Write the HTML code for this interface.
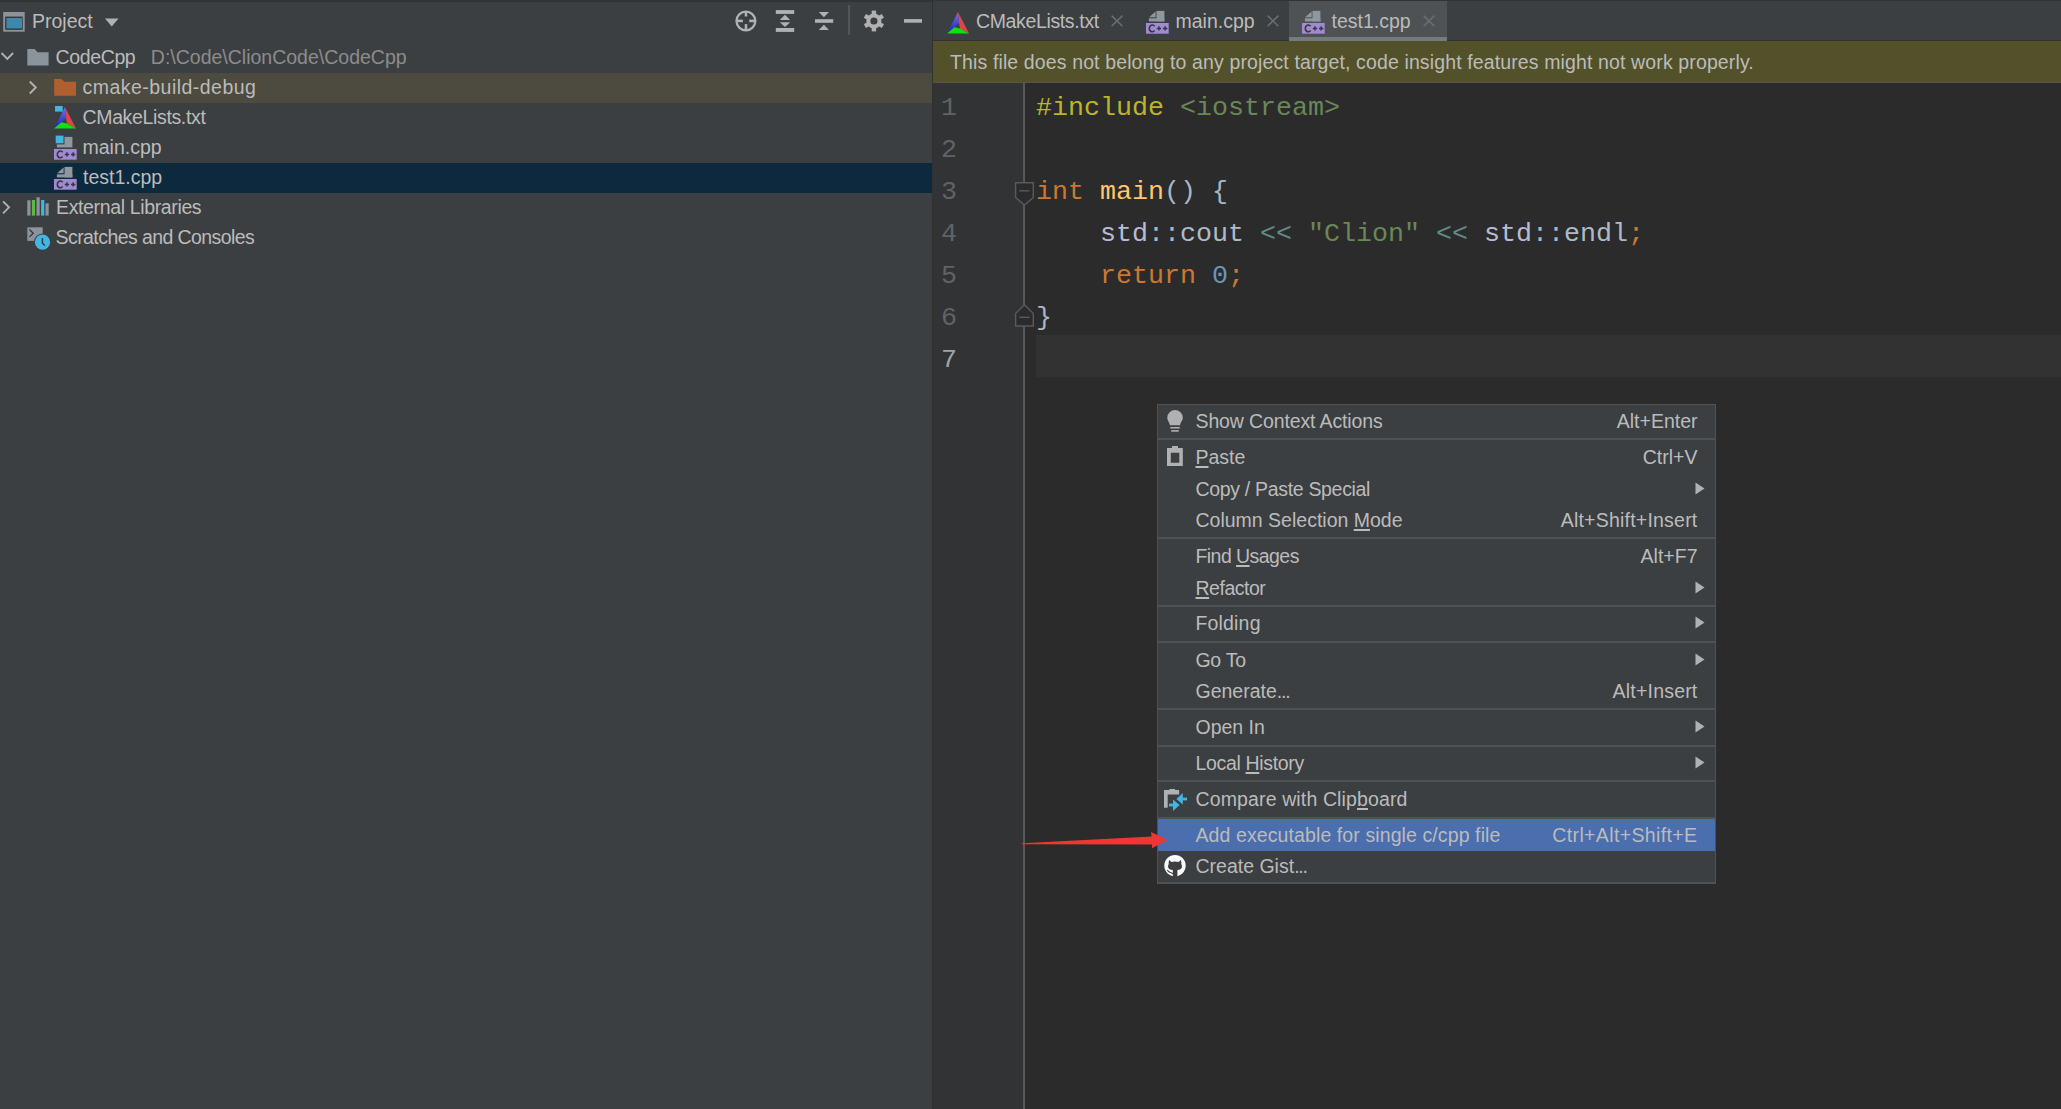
<!DOCTYPE html>
<html><head><meta charset="utf-8"><style>
html,body{margin:0;padding:0;width:2061px;height:1109px;overflow:hidden;background:#3C3F41}
.r,.t{position:absolute}
.t{white-space:pre}
u{text-decoration:underline;text-underline-offset:1.5px;text-decoration-thickness:1.6px}
</style></head><body>
<div class="r" style="left:0px;top:0px;width:2061px;height:1109px;background:#3C3F41;"></div>
<div class="r" style="left:0px;top:0px;width:932px;height:2px;background:#313335;"></div>
<div class="r" style="left:932px;top:0px;width:1129px;height:1px;background:#313335;"></div>
<div class="r" style="left:932px;top:0px;width:1px;height:1109px;background:#2F3133;"></div>
<div class="r" style="left:0px;top:73px;width:932px;height:30px;background:#4D4A3F;"></div>
<div class="r" style="left:0px;top:163px;width:932px;height:30px;background:#0D293E;"></div>
<div class="r" style="left:933px;top:41px;width:1128px;height:1068px;background:#2B2B2B;"></div>
<div class="r" style="left:933px;top:83px;width:90px;height:1026px;background:#313335;"></div>
<div class="r" style="left:1023px;top:83px;width:2px;height:1026px;background:#585858;"></div>
<div class="r" style="left:1036px;top:335px;width:1025px;height:42px;background:#323232;"></div>
<div class="r" style="left:933px;top:40px;width:1128px;height:1px;background:#323232;"></div>
<div class="r" style="left:933px;top:41px;width:1128px;height:41px;background:#52512A;"></div>
<div class="r" style="left:933px;top:82px;width:1128px;height:1px;background:#555553;"></div>
<div class="r" style="left:1289px;top:1px;width:158px;height:36px;background:#4E5254;"></div>
<div class="r" style="left:1289px;top:37px;width:158px;height:4px;background:#747A80;"></div>
<div class="r" style="left:1157px;top:404px;width:559px;height:480px;background:#515151;"></div>
<div class="r" style="left:1158px;top:405px;width:557px;height:477px;background:#3C3F41;"></div>
<div class="r" style="left:1158px;top:438px;width:557px;height:2px;background:#515151;"></div>
<div class="r" style="left:1158px;top:537px;width:557px;height:2px;background:#515151;"></div>
<div class="r" style="left:1158px;top:605px;width:557px;height:2px;background:#515151;"></div>
<div class="r" style="left:1158px;top:641px;width:557px;height:2px;background:#515151;"></div>
<div class="r" style="left:1158px;top:708px;width:557px;height:2px;background:#515151;"></div>
<div class="r" style="left:1158px;top:744.5px;width:557px;height:2px;background:#515151;"></div>
<div class="r" style="left:1158px;top:780px;width:557px;height:2px;background:#515151;"></div>
<div class="r" style="left:1158px;top:816.5px;width:557px;height:2px;background:#515151;"></div>
<div class="r" style="left:1158px;top:818.5px;width:557px;height:32.2px;background:#4B6EAF;"></div>

<svg class="r" style="left:0px;top:8px;overflow:visible" width="30" height="28" viewBox="0 8 30 28"><rect x="3.2" y="12" width="21.5" height="19.7" fill="#8A949A"/><rect x="5.2" y="16.6" width="17.5" height="13.2" fill="#2E3133"/><rect x="6.4" y="17.9" width="15.6" height="10.6" fill="#3D88AC"/></svg>
<svg class="r" style="left:100px;top:14px;overflow:visible" width="24" height="16" viewBox="100 14 24 16"><polygon points="105,18.4 118.5,18.4 111.75,26.4" fill="#AFB1B3"/></svg>
<svg class="r" style="left:728px;top:4px;overflow:visible" width="112" height="34" viewBox="728 4 112 34"><circle cx="745.9" cy="21" r="9.4" fill="none" stroke="#AFB1B3" stroke-width="2.3"/><rect x="744.7" y="11" width="2.5" height="5.5" fill="#AFB1B3"/><rect x="744.7" y="24.1" width="2.5" height="6" fill="#AFB1B3"/><rect x="736" y="19.6" width="6.9" height="2.6" fill="#AFB1B3"/><rect x="749.2" y="19.6" width="6.9" height="2.6" fill="#AFB1B3"/><rect x="775.8" y="10.1" width="18.4" height="3.8" fill="#AFB1B3"/><rect x="775.8" y="28" width="18.4" height="3.9" fill="#AFB1B3"/><polygon points="785,14.8 790.2,20 779.8,20" fill="#AFB1B3"/><polygon points="779.8,22.2 790.2,22.2 785,27" fill="#AFB1B3"/><polygon points="818.8,11.9 829,11.9 823.9,17.2" fill="#AFB1B3"/><rect x="815" y="19.2" width="18.2" height="3.6" fill="#AFB1B3"/><polygon points="823.9,24.8 829,30.1 818.8,30.1" fill="#AFB1B3"/></svg>
<svg class="r" style="left:846px;top:4px;overflow:visible" width="6" height="34" viewBox="846 4 6 34"><rect x="848.1" y="5" width="2" height="30" fill="#555758"/></svg>
<svg class="r" style="left:860px;top:6px;overflow:visible" width="28" height="30" viewBox="860 6 28 30"><rect x="871.7" y="10.6" width="4.4" height="5" fill="#AFB1B3" transform="rotate(0 873.9 21)"/><rect x="871.7" y="10.6" width="4.4" height="5" fill="#AFB1B3" transform="rotate(60 873.9 21)"/><rect x="871.7" y="10.6" width="4.4" height="5" fill="#AFB1B3" transform="rotate(120 873.9 21)"/><rect x="871.7" y="10.6" width="4.4" height="5" fill="#AFB1B3" transform="rotate(180 873.9 21)"/><rect x="871.7" y="10.6" width="4.4" height="5" fill="#AFB1B3" transform="rotate(240 873.9 21)"/><rect x="871.7" y="10.6" width="4.4" height="5" fill="#AFB1B3" transform="rotate(300 873.9 21)"/><circle cx="873.9" cy="21" r="5.6" fill="none" stroke="#AFB1B3" stroke-width="4"/></svg>
<svg class="r" style="left:900px;top:15px;overflow:visible" width="26" height="12" viewBox="900 15 26 12"><rect x="904" y="19.1" width="18" height="3.6" fill="#AFB1B3"/></svg>
<svg class="r" style="left:0px;top:48px;overflow:visible" width="16" height="16" viewBox="0 48 16 16"><polyline points="1.5,53 7.3,58.8 13.1,53" fill="none" stroke="#AFB1B3" stroke-width="1.9"/></svg>
<svg class="r" style="left:26px;top:78px;overflow:visible" width="14" height="20" viewBox="26 78 14 20"><polyline points="29.8,81.5 35.8,87.5 29.8,93.5" fill="none" stroke="#AFB1B3" stroke-width="1.9"/></svg>
<svg class="r" style="left:0px;top:198px;overflow:visible" width="14" height="20" viewBox="0 198 14 20"><polyline points="3,201.3 9,207.3 3,213.3" fill="none" stroke="#AFB1B3" stroke-width="1.9"/></svg>
<svg class="r" style="left:25px;top:46px;overflow:visible" width="26" height="22" viewBox="25 46 26 22"><path d="M27.3 49.1 H34.6 L37.6 52.2 H48.6 V65.6 H27.3 Z" fill="#8A949A"/></svg>
<svg class="r" style="left:52px;top:76px;overflow:visible" width="26" height="22" viewBox="52 76 26 22"><path d="M54.2 79 H61.5 L64.5 81.8 H76 V95.8 H54.2 Z" fill="#B15F30"/></svg>
<svg class="r" style="left:52.2px;top:104px;overflow:visible" width="26" height="27" viewBox="52.2 104 26 27"><defs><linearGradient id="gb65.2" x1="0" y1="0" x2="0" y2="1"><stop offset="0" stop-color="#6E78F0"/><stop offset="1" stop-color="#1A1AC0"/></linearGradient></defs><polygon points="65.2,107 66.2,118 61.6,122.2 54.2,128.5" fill="url(#gb65.2)"/><polygon points="65.2,107 76.2,128.5 67.2,123.5 66.2,118" fill="#D84848"/><polygon points="54.2,128.5 61.6,122.2 67.2,123.5 76.2,128.5" fill="#10E010"/><rect x="55.2" y="106" width="7.7" height="5.6" fill="#40B6E0"/></svg>
<svg class="r" style="left:944.8px;top:8.6px;overflow:visible" width="26" height="27" viewBox="944.8 8.6 26 27"><defs><linearGradient id="gb957.8" x1="0" y1="0" x2="0" y2="1"><stop offset="0" stop-color="#6E78F0"/><stop offset="1" stop-color="#1A1AC0"/></linearGradient></defs><polygon points="957.8,11.6 958.8,22.6 954.1999999999999,26.799999999999997 946.8,33.1" fill="url(#gb957.8)"/><polygon points="957.8,11.6 968.8,33.1 959.8,28.1 958.8,22.6" fill="#D84848"/><polygon points="946.8,33.1 954.1999999999999,26.799999999999997 959.8,28.1 968.8,33.1" fill="#10E010"/></svg>
<svg class="r" style="left:52.3px;top:133.4px;overflow:visible" width="28" height="30" viewBox="52.3 133.4 28 30"><rect x="57.199999999999996" y="137.3" width="15.5" height="10.5" fill="#8E989E"/><rect x="55.0" y="135.0" width="9.8" height="9.8" fill="#3C3F41"/><rect x="56.0" y="136.0" width="7.8" height="7.7" fill="#40B6E0"/><rect x="54.3" y="149.4" width="22.7" height="10.7" fill="#A08BD0"/><path d="M62.9 152.6 A3 3.4 0 1 0 62.9 157.0" fill="none" stroke="#3B3346" stroke-width="1.6"/><path d="M65.1 154.8 h4.3 M67.25 152.70000000000002 v4.3 M71.3 154.8 h4.3 M73.44999999999999 152.70000000000002 v4.3" stroke="#3B3346" stroke-width="1.5"/></svg>
<svg class="r" style="left:52.3px;top:163.0px;overflow:visible" width="28" height="30" viewBox="52.3 163.0 28 30"><rect x="64.8" y="166.9" width="7.9" height="10.5" fill="#8E989E"/><rect x="57.199999999999996" y="174.3" width="15.5" height="3.1" fill="#8E989E"/><polygon points="57.4,173.3 63.9,167.4 63.9,173.3" fill="#8E989E"/><rect x="54.3" y="179.0" width="22.7" height="10.7" fill="#A08BD0"/><path d="M62.9 182.2 A3 3.4 0 1 0 62.9 186.6" fill="none" stroke="#3B3346" stroke-width="1.6"/><path d="M65.1 184.4 h4.3 M67.25 182.3 v4.3 M71.3 184.4 h4.3 M73.44999999999999 182.3 v4.3" stroke="#3B3346" stroke-width="1.5"/></svg>
<svg class="r" style="left:1144.2px;top:7.199999999999999px;overflow:visible" width="28" height="30" viewBox="1144.2 7.199999999999999 28 30"><rect x="1156.7" y="11.1" width="7.9" height="10.5" fill="#8E989E"/><rect x="1149.1000000000001" y="18.5" width="15.5" height="3.1" fill="#8E989E"/><polygon points="1149.3,17.5 1155.8,11.6 1155.8,17.5" fill="#8E989E"/><rect x="1146.2" y="23.2" width="22.7" height="10.7" fill="#A08BD0"/><path d="M1154.8 26.4 A3 3.4 0 1 0 1154.8 30.799999999999997" fill="none" stroke="#3B3346" stroke-width="1.6"/><path d="M1157.0 28.6 h4.3 M1159.15 26.5 v4.3 M1163.2 28.6 h4.3 M1165.3500000000001 26.5 v4.3" stroke="#3B3346" stroke-width="1.5"/></svg>
<svg class="r" style="left:1300.3px;top:7.199999999999999px;overflow:visible" width="28" height="30" viewBox="1300.3 7.199999999999999 28 30"><rect x="1312.8" y="11.1" width="7.9" height="10.5" fill="#8E989E"/><rect x="1305.2" y="18.5" width="15.5" height="3.1" fill="#8E989E"/><polygon points="1305.3999999999999,17.5 1311.8999999999999,11.6 1311.8999999999999,17.5" fill="#8E989E"/><rect x="1302.3" y="23.2" width="22.7" height="10.7" fill="#A08BD0"/><path d="M1310.8999999999999 26.4 A3 3.4 0 1 0 1310.8999999999999 30.799999999999997" fill="none" stroke="#3B3346" stroke-width="1.6"/><path d="M1313.1 28.6 h4.3 M1315.25 26.5 v4.3 M1319.3 28.6 h4.3 M1321.45 26.5 v4.3" stroke="#3B3346" stroke-width="1.5"/></svg>
<svg class="r" style="left:24px;top:194px;overflow:visible" width="28" height="24" viewBox="24 194 28 24"><rect x="27.3" y="200.3" width="3.2" height="15.299999999999983" fill="#8A949A"/><rect x="31.9" y="200" width="3.2" height="15.599999999999994" fill="#5FB845"/><rect x="36.5" y="197.3" width="3.2" height="18.299999999999983" fill="#8A949A"/><rect x="41.1" y="200" width="3.2" height="15.599999999999994" fill="#40B6E0"/><rect x="45.5" y="203.3" width="3.2" height="12.299999999999983" fill="#8A949A"/></svg>
<svg class="r" style="left:24px;top:222px;overflow:visible" width="30" height="30" viewBox="24 222 30 30"><rect x="27.3" y="227.3" width="15.4" height="13.6" fill="#8A949A"/><polyline points="29.5,229.5 33.2,233.2 29.5,236.9" fill="none" stroke="#34373A" stroke-width="1.3"/><circle cx="42.5" cy="242.2" r="8.6" fill="#3C3F41"/><circle cx="42.5" cy="242.2" r="7.6" fill="#40B6E0"/><polyline points="42.4,238 42.4,243 44.8,245.6" fill="none" stroke="#2B3A44" stroke-width="1.4"/></svg>
<svg class="r" style="left:1109px;top:12px;overflow:visible" width="16" height="18" viewBox="1109 12 16 18"><path d="M1111.6 15.6 L1122.4 26.2 M1122.4 15.6 L1111.6 26.2" stroke="#6B6E70" stroke-width="1.5"/></svg>
<svg class="r" style="left:1265px;top:12px;overflow:visible" width="16" height="18" viewBox="1265 12 16 18"><path d="M1267.6 15.6 L1278.4 26.2 M1278.4 15.6 L1267.6 26.2" stroke="#6B6E70" stroke-width="1.5"/></svg>
<svg class="r" style="left:1421.4px;top:12px;overflow:visible" width="16" height="18" viewBox="1421.4 12 16 18"><path d="M1424.0 15.6 L1434.8000000000002 26.2 M1434.8000000000002 15.6 L1424.0 26.2" stroke="#6B6E70" stroke-width="1.5"/></svg>
<svg class="r" style="left:1012px;top:178px;overflow:visible" width="26" height="30" viewBox="1012 178 26 30"><path d="M1015.6 182.8 H1033.3 V197.5 L1024.45 205 L1015.6 197.5 Z" fill="#2B2B2B" stroke="#5A5A5A" stroke-width="1.4"/><path d="M1019.2 190.8 H1029.5" stroke="#5A5A5A" stroke-width="1.4"/></svg>
<svg class="r" style="left:1012px;top:300px;overflow:visible" width="26" height="30" viewBox="1012 300 26 30"><path d="M1015.6 326 H1033.3 V313.5 L1024.45 304.8 L1015.6 313.5 Z" fill="#2B2B2B" stroke="#5A5A5A" stroke-width="1.4"/><path d="M1019.2 317.3 H1029.5" stroke="#5A5A5A" stroke-width="1.4"/></svg>
<svg class="r" style="left:1162px;top:406px;overflow:visible" width="26" height="30" viewBox="1162 406 26 30"><path d="M1169.9 425.3 C1169.3 421.5 1167.3 420.5 1167.3 417.7 A7.75 7.75 0 0 1 1182.8 417.7 C1182.8 420.5 1180.7 421.5 1180.1 425.3 Z" fill="#AFB1B3"/><rect x="1170.2" y="427" width="9.6" height="1.5" fill="#AFB1B3"/><rect x="1171.2" y="430.1" width="7.6" height="1.6" fill="#AFB1B3"/></svg>
<svg class="r" style="left:1162px;top:443px;overflow:visible" width="26" height="26" viewBox="1162 443 26 26"><path d="M1167 448 H1172 V446 H1178 V448 H1182.8 V466 H1167 Z M1170.8 452.7 V462.7 H1179.3 V452.7 Z" fill="#AFB1B3" fill-rule="evenodd"/></svg>
<svg class="r" style="left:1160px;top:786px;overflow:visible" width="32" height="30" viewBox="1160 786 32 30"><path d="M1164 790 H1169.5 V789 H1175 V790 H1179.1 V794.4 H1167.7 V807.7 H1164 Z" fill="#AFB1B3"/><rect x="1169" y="803.6" width="5" height="2.8" fill="#40B6E0"/><polygon points="1173,799.5 1179.6,805 1173,811" fill="#40B6E0"/><rect x="1182.4" y="797.6" width="4.6" height="2.8" fill="#40B6E0"/><polygon points="1182.8,793 1176.4,799 1182.8,804.5" fill="#40B6E0"/></svg>
<svg class="r" style="left:1162px;top:852px;overflow:visible" width="28" height="28" viewBox="1162 852 28 28"><circle cx="1175" cy="865.6" r="10.7" fill="#FAFAFA"/><path d="M1169.2 860 L1171.4 862 Q1175 861.1 1178.6 862 L1180.8 860 Q1181.7 862.3 1181.3 864 Q1182.2 865.5 1181.9 867.2 Q1181.2 869.6 1177.4 870 L1177.4 877.2 L1172.8 877.2 L1172.8 870 Q1168.8 869.6 1168.1 867.2 Q1167.8 865.5 1168.7 864 Q1168.3 862.3 1169.2 860 Z" fill="#3C3F41"/><path d="M1167.3 870 Q1168.6 872.3 1170.6 872.5 Q1171.9 872.7 1172.9 874" fill="none" stroke="#3C3F41" stroke-width="1.1"/></svg>
<svg class="r" style="left:1018px;top:828px;overflow:visible" width="156" height="24" viewBox="1018 828 156 24"><polygon points="1022,843.3 1151.6,836.6 1151,831.9 1167.6,839.9 1152,848.2 1152,844.5 1022,844.3" fill="#F03535"/></svg>

<div class="t" style="left:32.00px;top:9.94px;font-size:19.5px;line-height:23.40px;color:#BBBBBB;font-family:'Liberation Sans', sans-serif;letter-spacing:0px;">Project</div>
<div class="t" style="left:55.60px;top:45.54px;font-size:19.5px;line-height:23.40px;color:#BBBBBB;font-family:'Liberation Sans', sans-serif;letter-spacing:-0.38px;">CodeCpp</div>
<div class="t" style="left:82.50px;top:75.54px;font-size:19.5px;line-height:23.40px;color:#BBBBBB;font-family:'Liberation Sans', sans-serif;letter-spacing:0.47px;">cmake-build-debug</div>
<div class="t" style="left:82.50px;top:105.54px;font-size:19.5px;line-height:23.40px;color:#BBBBBB;font-family:'Liberation Sans', sans-serif;letter-spacing:-0.35px;">CMakeLists.txt</div>
<div class="t" style="left:82.50px;top:135.54px;font-size:19.5px;line-height:23.40px;color:#BBBBBB;font-family:'Liberation Sans', sans-serif;letter-spacing:0px;">main.cpp</div>
<div class="t" style="left:83.00px;top:165.54px;font-size:19.5px;line-height:23.40px;color:#BBBBBB;font-family:'Liberation Sans', sans-serif;letter-spacing:0px;">test1.cpp</div>
<div class="t" style="left:56.00px;top:195.54px;font-size:19.5px;line-height:23.40px;color:#BBBBBB;font-family:'Liberation Sans', sans-serif;letter-spacing:-0.36px;">External Libraries</div>
<div class="t" style="left:55.60px;top:225.54px;font-size:19.5px;line-height:23.40px;color:#BBBBBB;font-family:'Liberation Sans', sans-serif;letter-spacing:-0.58px;">Scratches and Consoles</div>
<div class="t" style="left:150.80px;top:45.54px;font-size:19.5px;line-height:23.40px;color:#8C8C8C;font-family:'Liberation Sans', sans-serif;letter-spacing:0px;">D:\Code\ClionCode\CodeCpp</div>
<div class="t" style="left:976.00px;top:10.04px;font-size:19.5px;line-height:23.40px;color:#BBBBBB;font-family:'Liberation Sans', sans-serif;letter-spacing:-0.36px;">CMakeLists.txt</div>
<div class="t" style="left:1175.50px;top:10.04px;font-size:19.5px;line-height:23.40px;color:#BBBBBB;font-family:'Liberation Sans', sans-serif;letter-spacing:0px;">main.cpp</div>
<div class="t" style="left:1331.50px;top:10.04px;font-size:19.5px;line-height:23.40px;color:#BBBBBB;font-family:'Liberation Sans', sans-serif;letter-spacing:0px;">test1.cpp</div>
<div class="t" style="left:950.00px;top:50.54px;font-size:19.5px;line-height:23.40px;color:#BBBBBB;font-family:'Liberation Sans', sans-serif;letter-spacing:0.125px;">This file does not belong to any project target, code insight features might not work properly.</div>
<div class="t" style="left:941.00px;top:91.50px;font-size:26.67px;line-height:32.00px;color:#606366;font-family:'Liberation Mono', monospace;letter-spacing:0px;">1</div>
<div class="t" style="left:1036.00px;top:91.50px;font-size:26.67px;line-height:32.00px;color:#A9B7C6;font-family:'Liberation Mono', monospace;letter-spacing:0px;"><span style="color:#BBB529">#include</span> <span style="color:#6A8759">&lt;iostream&gt;</span></div>
<div class="t" style="left:941.00px;top:133.50px;font-size:26.67px;line-height:32.00px;color:#606366;font-family:'Liberation Mono', monospace;letter-spacing:0px;">2</div>
<div class="t" style="left:941.00px;top:175.50px;font-size:26.67px;line-height:32.00px;color:#606366;font-family:'Liberation Mono', monospace;letter-spacing:0px;">3</div>
<div class="t" style="left:1036.00px;top:175.50px;font-size:26.67px;line-height:32.00px;color:#A9B7C6;font-family:'Liberation Mono', monospace;letter-spacing:0px;"><span style="color:#CC7832">int</span> <span style="color:#FFC66D">main</span><span style="color:#A9B7C6">() {</span></div>
<div class="t" style="left:941.00px;top:217.50px;font-size:26.67px;line-height:32.00px;color:#606366;font-family:'Liberation Mono', monospace;letter-spacing:0px;">4</div>
<div class="t" style="left:1036.00px;top:217.50px;font-size:26.67px;line-height:32.00px;color:#A9B7C6;font-family:'Liberation Mono', monospace;letter-spacing:0px;">    <span style="color:#B9BCD1">std</span><span style="color:#A9B7C6">::</span><span style="color:#AEBBC7">cout</span> <span style="color:#5F8C8A">&lt;&lt;</span> <span style="color:#6A8759">"Clion"</span> <span style="color:#5F8C8A">&lt;&lt;</span> <span style="color:#B9BCD1">std</span><span style="color:#A9B7C6">::</span><span style="color:#AEBBC7">endl</span><span style="color:#CC7832">;</span></div>
<div class="t" style="left:941.00px;top:259.50px;font-size:26.67px;line-height:32.00px;color:#606366;font-family:'Liberation Mono', monospace;letter-spacing:0px;">5</div>
<div class="t" style="left:1036.00px;top:259.50px;font-size:26.67px;line-height:32.00px;color:#A9B7C6;font-family:'Liberation Mono', monospace;letter-spacing:0px;">    <span style="color:#CC7832">return</span> <span style="color:#6897BB">0</span><span style="color:#CC7832">;</span></div>
<div class="t" style="left:941.00px;top:301.50px;font-size:26.67px;line-height:32.00px;color:#606366;font-family:'Liberation Mono', monospace;letter-spacing:0px;">6</div>
<div class="t" style="left:1036.00px;top:301.50px;font-size:26.67px;line-height:32.00px;color:#A9B7C6;font-family:'Liberation Mono', monospace;letter-spacing:0px;"><span style="color:#A9B7C6">}</span></div>
<div class="t" style="left:941.00px;top:343.50px;font-size:26.67px;line-height:32.00px;color:#A4A3A3;font-family:'Liberation Mono', monospace;letter-spacing:0px;">7</div>
<div class="t" style="left:1195.50px;top:409.84px;font-size:19.5px;line-height:23.40px;color:#BBBBBB;font-family:'Liberation Sans', sans-serif;letter-spacing:-0.13px;">Show Context Actions</div>
<div class="t" style="left:1697.50px;top:409.84px;font-size:19.5px;line-height:23.40px;color:#BBBBBB;font-family:'Liberation Sans', sans-serif;letter-spacing:0px;transform:translateX(-100%);">Alt+Enter</div>
<div class="t" style="left:1195.50px;top:446.34px;font-size:19.5px;line-height:23.40px;color:#BBBBBB;font-family:'Liberation Sans', sans-serif;letter-spacing:0px;"><u>P</u>aste</div>
<div class="t" style="left:1697.50px;top:446.34px;font-size:19.5px;line-height:23.40px;color:#BBBBBB;font-family:'Liberation Sans', sans-serif;letter-spacing:0px;transform:translateX(-100%);">Ctrl+V</div>
<div class="t" style="left:1195.50px;top:477.94px;font-size:19.5px;line-height:23.40px;color:#BBBBBB;font-family:'Liberation Sans', sans-serif;letter-spacing:-0.32px;">Copy / Paste Special</div>
<svg class="r" style="left:1695px;top:481.9px" width="10" height="13"><path d="M0.5 0.5 L9.5 6.5 L0.5 12.5Z" fill="#AFB1B3"/></svg>
<div class="t" style="left:1195.50px;top:509.14px;font-size:19.5px;line-height:23.40px;color:#BBBBBB;font-family:'Liberation Sans', sans-serif;letter-spacing:0px;">Column Selection <u>M</u>ode</div>
<div class="t" style="left:1697.50px;top:509.14px;font-size:19.5px;line-height:23.40px;color:#BBBBBB;font-family:'Liberation Sans', sans-serif;letter-spacing:0.22px;transform:translateX(-100%);">Alt+Shift+Insert</div>
<div class="t" style="left:1195.50px;top:545.04px;font-size:19.5px;line-height:23.40px;color:#BBBBBB;font-family:'Liberation Sans', sans-serif;letter-spacing:-0.56px;">Find <u>U</u>sages</div>
<div class="t" style="left:1697.50px;top:545.04px;font-size:19.5px;line-height:23.40px;color:#BBBBBB;font-family:'Liberation Sans', sans-serif;letter-spacing:0px;transform:translateX(-100%);">Alt+F7</div>
<div class="t" style="left:1195.50px;top:577.14px;font-size:19.5px;line-height:23.40px;color:#BBBBBB;font-family:'Liberation Sans', sans-serif;letter-spacing:-0.49px;"><u>R</u>efactor</div>
<svg class="r" style="left:1695px;top:581.1px" width="10" height="13"><path d="M0.5 0.5 L9.5 6.5 L0.5 12.5Z" fill="#AFB1B3"/></svg>
<div class="t" style="left:1195.50px;top:612.34px;font-size:19.5px;line-height:23.40px;color:#BBBBBB;font-family:'Liberation Sans', sans-serif;letter-spacing:0.17px;">Folding</div>
<svg class="r" style="left:1695px;top:616.3px" width="10" height="13"><path d="M0.5 0.5 L9.5 6.5 L0.5 12.5Z" fill="#AFB1B3"/></svg>
<div class="t" style="left:1195.50px;top:648.54px;font-size:19.5px;line-height:23.40px;color:#BBBBBB;font-family:'Liberation Sans', sans-serif;letter-spacing:-0.3px;">Go To</div>
<svg class="r" style="left:1695px;top:652.5px" width="10" height="13"><path d="M0.5 0.5 L9.5 6.5 L0.5 12.5Z" fill="#AFB1B3"/></svg>
<div class="t" style="left:1195.50px;top:679.74px;font-size:19.5px;line-height:23.40px;color:#BBBBBB;font-family:'Liberation Sans', sans-serif;letter-spacing:0px;">Generate<span style="letter-spacing:-1.2px">...</span></div>
<div class="t" style="left:1697.50px;top:679.74px;font-size:19.5px;line-height:23.40px;color:#BBBBBB;font-family:'Liberation Sans', sans-serif;letter-spacing:0.2px;transform:translateX(-100%);">Alt+Insert</div>
<div class="t" style="left:1195.50px;top:715.74px;font-size:19.5px;line-height:23.40px;color:#BBBBBB;font-family:'Liberation Sans', sans-serif;letter-spacing:0px;">Open In</div>
<svg class="r" style="left:1695px;top:719.7px" width="10" height="13"><path d="M0.5 0.5 L9.5 6.5 L0.5 12.5Z" fill="#AFB1B3"/></svg>
<div class="t" style="left:1195.50px;top:751.74px;font-size:19.5px;line-height:23.40px;color:#BBBBBB;font-family:'Liberation Sans', sans-serif;letter-spacing:-0.33px;">Local <u>H</u>istory</div>
<svg class="r" style="left:1695px;top:755.7px" width="10" height="13"><path d="M0.5 0.5 L9.5 6.5 L0.5 12.5Z" fill="#AFB1B3"/></svg>
<div class="t" style="left:1195.50px;top:787.64px;font-size:19.5px;line-height:23.40px;color:#BBBBBB;font-family:'Liberation Sans', sans-serif;letter-spacing:0.13px;">Compare with Clip<u>b</u>oard</div>
<div class="t" style="left:1195.50px;top:823.64px;font-size:19.5px;line-height:23.40px;color:#BBBBBB;font-family:'Liberation Sans', sans-serif;letter-spacing:0.1px;">Add executable for single c/cpp file</div>
<div class="t" style="left:1697.50px;top:823.64px;font-size:19.5px;line-height:23.40px;color:#BBBBBB;font-family:'Liberation Sans', sans-serif;letter-spacing:0.37px;transform:translateX(-100%);">Ctrl+Alt+Shift+E</div>
<div class="t" style="left:1195.50px;top:855.34px;font-size:19.5px;line-height:23.40px;color:#BBBBBB;font-family:'Liberation Sans', sans-serif;letter-spacing:0px;">Create Gist<span style="letter-spacing:-1.2px">...</span></div>

</body></html>
